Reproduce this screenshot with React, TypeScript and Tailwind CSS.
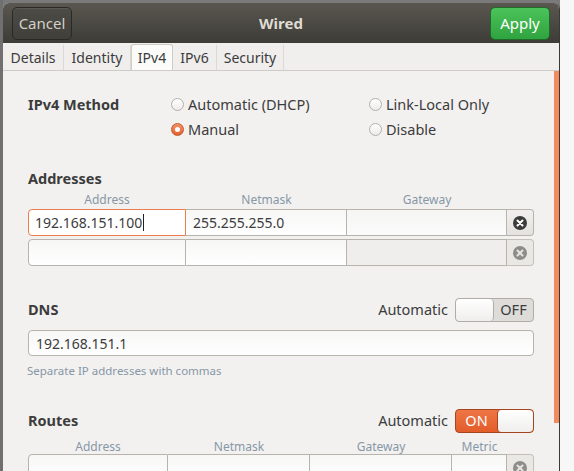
import React from 'react';

function Radio({ checked }: { checked?: boolean }) {
  if (checked) {
    return (
      <span className="flex h-[13px] w-[13px] shrink-0 items-center justify-center rounded-full border border-[#c4572c] bg-gradient-to-b from-[#f39267] to-[#e3602d]">
        <span className="h-[5px] w-[5px] rounded-full bg-white" />
      </span>
    );
  }
  return (
    <span className="h-[13px] w-[13px] shrink-0 rounded-full border border-[#b3b0ab] bg-gradient-to-b from-white to-[#ecebe8]" />
  );
}

function DeleteIcon({ dim }: { dim?: boolean }) {
  return (
    <svg width="14" height="14" viewBox="0 0 14 14">
      <circle cx="7" cy="7" r="7" fill={dim ? '#8f8d89' : '#3c3c3c'} />
      <path d="M4.5 4.5 L9.5 9.5 M9.5 4.5 L4.5 9.5" stroke={dim ? '#e6e4e1' : '#ffffff'} strokeWidth="2" strokeLinecap="round" />
    </svg>
  );
}

function Toggle({ on }: { on?: boolean }) {
  if (on) {
    return (
      <div className="flex h-[24px] w-[79px] overflow-hidden rounded-[4px] border border-[#a5451f] bg-gradient-to-b from-[#ef7544] to-[#e25d2a]">
        <div className="flex w-[41px] items-center justify-center text-[14.5px] text-white">ON</div>
        <div className="flex-1 rounded-[4px] border-l border-[#a5451f] bg-gradient-to-b from-white to-[#efeeec]" />
      </div>
    );
  }
  return (
    <div className="flex h-[24px] w-[79px] overflow-hidden rounded-[4px] border border-[#b0ada8] bg-[#dedcd8]">
      <div className="w-[38px] rounded-[4px] border-r border-[#b0ada8] bg-gradient-to-b from-white to-[#efeeec]" />
      <div className="flex flex-1 items-center justify-center text-[14.5px] text-[#3c3c3c]">OFF</div>
    </div>
  );
}

const tabs = [
  { name: 'Details', w: 'w-[61px]' },
  { name: 'Identity', w: 'w-[67px]' },
  { name: 'IPv4', w: 'w-[42px]', active: true },
  { name: 'IPv6', w: 'w-[44px]' },
  { name: 'Security', w: 'w-[67px]' },
];

export default function App() {
  return (
    <div className="flex h-[471px] w-[574px] overflow-hidden bg-[#f7f7f7] font-['Noto_Sans',sans-serif] text-[14.5px] text-[#3c3c3c]">
      <div className="w-[3px] shrink-0 bg-[#707070]" />
      <div className="flex w-[557px] shrink-0 flex-col bg-[#7a7a7a] pt-[3px]">
        <div className="flex flex-1 flex-col overflow-hidden rounded-t-[6px] border-r border-[#3a3936] bg-[#f2f1f0]">
          {/* header bar */}
          <div className="grid h-[40px] grid-cols-[1fr_auto_1fr] items-center bg-gradient-to-b from-[#5a5750] to-[#3d3c37] px-[9px]">
            <div>
              <button className="h-[33px] w-[60px] rounded-[5px] border border-[#2a2926] bg-gradient-to-b from-[#4d4b45] to-[#403f3a] text-[15px] text-[#d3cfc6] shadow-[inset_0_1px_0_rgba(255,255,255,0.08)]">
                Cancel
              </button>
            </div>
            <div className="text-[15px] font-bold text-[#dfdbd2]">Wired</div>
            <div className="flex justify-end">
              <button className="h-[33px] w-[60px] rounded-[5px] border border-[#1f6a28] bg-gradient-to-b from-[#4cc35a] to-[#2fa33f] text-[15px] text-white">
                Apply
              </button>
            </div>
          </div>

          {/* tabs */}
          <div className="flex h-[28px] items-end border-b border-[#cfccc7] bg-[#f0efed] text-[14px]">
            {tabs.map((t) =>
              t.active ? (
                <div
                  key={t.name}
                  className={`${t.w} flex h-[26px] items-center justify-center rounded-t-[3px] border-x border-t border-[#cfccc7] bg-[#fbfbfa]`}
                >
                  {t.name}
                </div>
              ) : (
                <div
                  key={t.name}
                  className={`${t.w} flex h-[25px] items-center justify-center border-r border-[#dcd9d5] bg-[#efeeec]`}
                >
                  {t.name}
                </div>
              )
            )}
          </div>

          {/* content */}
          <div className="flex flex-1 overflow-hidden">
            <div className="flex-1 pl-[25px] pr-[20px]">
              {/* method */}
              <div className="mt-[21px] grid grid-cols-[143px_198px_1fr] grid-rows-[25px_25px] items-center">
                <div className="font-bold">IPv4 Method</div>
                <label className="flex items-center gap-[4px]">
                  <Radio />
                  Automatic (DHCP)
                </label>
                <label className="flex items-center gap-[4px]">
                  <Radio />
                  Link-Local Only
                </label>
                <div />
                <label className="flex items-center gap-[4px]">
                  <Radio checked />
                  Manual
                </label>
                <label className="flex items-center gap-[4px]">
                  <Radio />
                  Disable
                </label>
              </div>

              {/* addresses */}
              <div className="mt-[26px] h-[20px] font-bold leading-[20px]">Addresses</div>
              <div className="mt-[5px] grid h-[14px] grid-cols-[158px_161px_160px_27px] text-center text-[12px] leading-[14px] text-[#8797a6]">
                <div>Address</div>
                <div>Netmask</div>
                <div>Gateway</div>
                <div />
              </div>
              <div className="mt-[2px] grid h-[27px] grid-cols-[158px_161px_160px_27px] text-[14px]">
                <div className="flex items-center rounded-l-[4px] border border-[#eb7c4f] bg-white pl-[6px]">
                  192.168.151.100
                  <span className="ml-[1px] h-[17px] w-[1px] bg-[#222]" />
                </div>
                <div className="flex items-center border-y border-r border-[#b7b4ae] bg-gradient-to-b from-[#f7f7f6] to-white pl-[7px]">
                  255.255.255.0
                </div>
                <div className="border-y border-r border-[#b7b4ae] bg-gradient-to-b from-[#f5f5f4] to-[#fbfbfb]" />
                <div className="flex items-center justify-center rounded-r-[4px] border-y border-r border-[#b7b4ae] bg-gradient-to-b from-[#f1f0ee] to-[#e4e2df]">
                  <DeleteIcon />
                </div>
              </div>
              <div className="mt-[3px] grid h-[27px] grid-cols-[158px_161px_160px_27px]">
                <div className="rounded-l-[4px] border border-[#b7b4ae] bg-gradient-to-b from-[#f7f7f6] to-white" />
                <div className="border-y border-r border-[#b7b4ae] bg-gradient-to-b from-[#f7f7f6] to-white" />
                <div className="border-y border-r border-[#b7b4ae] bg-[#efeeec]" />
                <div className="flex items-center justify-center rounded-r-[4px] border-y border-r border-[#c4c1bc] bg-[#e9e8e5]">
                  <DeleteIcon dim />
                </div>
              </div>

              {/* dns */}
              <div className="mt-[32px] flex h-[24px] items-center justify-between">
                <div className="font-bold">DNS</div>
                <div className="flex items-center gap-[7px]">
                  <span>Automatic</span>
                  <Toggle />
                </div>
              </div>
              <div className="mt-[8px] flex h-[26px] items-center rounded-[4px] border border-[#b7b4ae] bg-gradient-to-b from-[#f7f7f6] to-white pl-[7px] text-[14px]">
                192.168.151.1
              </div>
              <div className="-ml-[1px] mt-[8px] h-[14px] text-[11.5px] leading-[14px] text-[#8797a6]">
                Separate IP addresses with commas
              </div>

              {/* routes */}
              <div className="mt-[31px] flex h-[24px] items-center justify-between">
                <div className="font-bold">Routes</div>
                <div className="flex items-center gap-[7px]">
                  <span>Automatic</span>
                  <Toggle on />
                </div>
              </div>
              <div className="mt-[7px] grid h-[14px] grid-cols-[140px_142px_142px_55px_27px] text-center text-[12px] leading-[14px] text-[#8797a6]">
                <div>Address</div>
                <div>Netmask</div>
                <div>Gateway</div>
                <div>Metric</div>
                <div />
              </div>
              <div className="grid h-[27px] grid-cols-[140px_142px_142px_55px_27px]">
                <div className="rounded-l-[4px] border border-[#b7b4ae] bg-gradient-to-b from-[#f7f7f6] to-white" />
                <div className="border-y border-r border-[#b7b4ae] bg-gradient-to-b from-[#f7f7f6] to-white" />
                <div className="border-y border-r border-[#b7b4ae] bg-gradient-to-b from-[#f7f7f6] to-white" />
                <div className="border-y border-r border-[#b7b4ae] bg-gradient-to-b from-[#f7f7f6] to-white" />
                <div className="flex items-center justify-center rounded-r-[4px] border-y border-r border-[#c4c1bc] bg-[#e9e8e5]">
                  <DeleteIcon dim />
                </div>
              </div>
            </div>
            <div className="w-[5px] shrink-0">
              <div className="h-[352px] w-full bg-[#ef8b5d]" />
            </div>
          </div>
        </div>
      </div>
      <div className="flex-1 bg-[#f7f7f7]" />
    </div>
  );
}
